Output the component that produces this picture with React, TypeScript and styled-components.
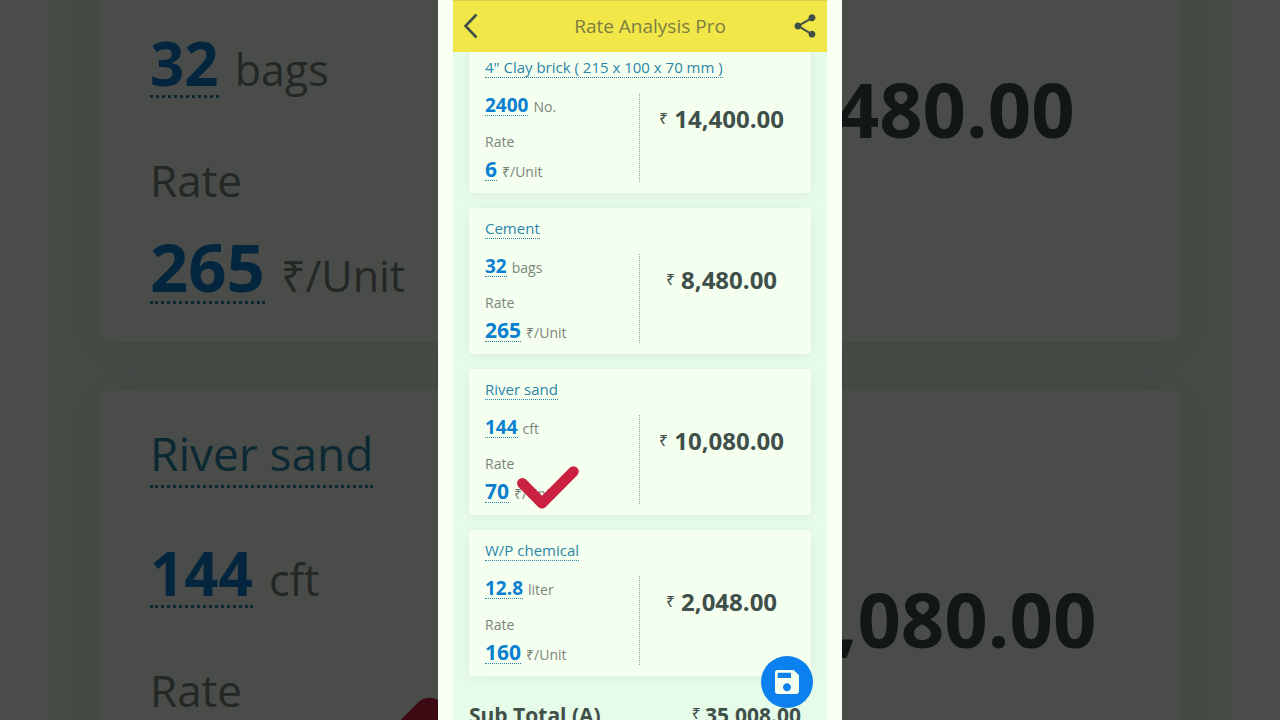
import React from 'react';
import styled, { createGlobalStyle, ThemeProvider } from 'styled-components';
import { MdSave, MdShare } from 'react-icons/md';

type Sized = { theme: { scale?: number } };

/* Turns a phone measure into whole pixels at the current theme's scale. */
const u = (n: number) => ({ theme }: Sized) => `${Math.round(n * (theme.scale ?? 1))}px`;

const GlobalStyle = createGlobalStyle`
  * { box-sizing: border-box; }
  body { margin: 0; background: #4b4d4a; font-family: 'Open Sans', 'Noto Sans', sans-serif; }
  button { font: inherit; color: inherit; border: 0; padding: 0; background: none; cursor: pointer; }
`;

const Stage = styled.main`
  position: relative;
  display: flex;
  justify-content: center;
  height: 100vh;
  overflow: hidden;
`;

const Backdrop = styled.div`
  position: absolute;
  inset: 0;
  padding: 0 48px;
  overflow: hidden;
  background: #f7fff5;

  &::after {
    content: '';
    position: absolute;
    inset: 0;
    background: rgba(0, 0, 0, 0.7);
  }
`;

const BackdropScreen = styled.div`
  height: 100%;
  overflow: hidden;
  background: #e6fbe8;
`;

const Phone = styled.section`
  position: relative;
  display: flex;
  flex-direction: column;
  width: 100%;
  max-width: 404px;
  padding: 0 15px;
  background: #f7fff5;
`;

const Header = styled.header`
  display: flex;
  align-items: center;
  justify-content: space-between;
  flex: none;
  height: 52px;
  padding: 0 8px;
  background: #f1e748;
  box-shadow: inset 0 1px #d9d052;
  color: #3f4f49;
`;

const HeaderButton = styled.button`
  display: grid;
  place-items: center;
  width: 28px;
  height: 28px;
`;

const Title = styled.h1`
  margin: 0;
  padding-left: 20px;
  font-size: 19px;
  line-height: 26px;
  font-weight: 400;
  color: #7d7d45;
`;

const Screen = styled.div`
  flex: 1;
  min-height: 0;
  overflow: hidden;
  background: #e6fbe8;
`;

const List = styled.ul<{ $scrolled: number }>`
  display: flex;
  flex-direction: column;
  gap: ${u(15)};
  margin: -${(p) => p.$scrolled}px 0 0;
  padding: 0 ${u(16)};
  list-style: none;
`;

const Card = styled.li`
  position: relative;
  padding: ${u(10)} ${u(8)} ${u(11)} ${u(16)};
  background: #f5fff0;
  border-radius: ${u(4)};
  box-shadow: 0 ${u(2)} ${u(12)} rgba(20, 60, 30, 0.06);
`;

const Name = styled.button`
  display: block;
  margin-bottom: ${u(15)};
  border-bottom: ${u(1)} dotted #2b86a8;
  font-size: ${u(14.5)};
  line-height: ${u(20)};
  color: #2b86a8;
  white-space: nowrap;
`;

const Body = styled.div`
  display: grid;
  grid-template-columns: ${u(155)} 1fr;
`;

const Figures = styled.div`
  padding-top: ${u(2)};
  border-right: ${u(1)} dotted #9aa59b;
`;

const Line = styled.div`
  display: flex;
  align-items: baseline;
  gap: ${u(5)};
`;

const Value = styled.button<{ $rate?: boolean }>`
  border-bottom: ${u(1)} dotted #2b86a8;
  font-size: ${(p) => u(p.$rate ? 21 : 19)(p)};
  line-height: ${(p) => u(p.$rate ? 22 : 20)(p)};
  font-weight: 700;
  color: #0a80d0;
`;

const Unit = styled.span`
  font-size: ${u(13.5)};
  line-height: ${u(20)};
  color: #7b857c;
`;

const Label = styled.div`
  margin: ${u(15)} 0 ${u(6)};
  font-size: ${u(14)};
  line-height: ${u(20)};
  color: #7b857c;
`;

const Amount = styled.div`
  display: flex;
  justify-content: center;
  align-items: flex-start;
  gap: ${u(6)};
  padding-top: ${u(10)};
  font-size: ${u(24)};
  line-height: ${u(32)};
  font-weight: 700;
  color: #3f4f49;
`;

const Rupee = styled.span`
  font-size: ${u(16)};
  line-height: ${u(30)};
  font-weight: 400;
`;

const Tick = styled.svg`
  position: absolute;
  left: ${u(48)};
  top: ${u(97)};
  width: ${u(62)};
  height: ${u(43)};
`;

const SubTotal = styled.div`
  display: flex;
  justify-content: space-between;
  padding: 25px 26px 0 16px;
  font-size: 21px;
  line-height: 28px;
  font-weight: 700;
  color: #3f4f49;
`;

const SubTotalAmount = styled.span`
  display: flex;
  align-items: flex-start;
  gap: 4px;
`;

const SubTotalRupee = styled(Rupee)`
  line-height: 24px;
`;

const SaveButton = styled.button`
  position: absolute;
  right: 29px;
  bottom: 12px;
  display: grid;
  place-items: center;
  width: 52px;
  height: 52px;
  border-radius: 50%;
  background: #0b80ee;
  color: #f5fff0;
`;

type Material = {
  name: string;
  quantity: string;
  unit: string;
  rate: string;
  amount: string;
  checked?: boolean;
};

const materials: Material[] = [
  { name: '4" Clay brick ( 215 x 100 x 70 mm )', quantity: '2400', unit: 'No.', rate: '6', amount: '14,400.00' },
  { name: 'Cement', quantity: '32', unit: 'bags', rate: '265', amount: '8,480.00' },
  { name: 'River sand', quantity: '144', unit: 'cft', rate: '70', amount: '10,080.00', checked: true },
  { name: 'W/P chemical', quantity: '12.8', unit: 'liter', rate: '160', amount: '2,048.00' },
];

const MaterialCard = ({ item }: { item: Material }) => (
  <Card>
    <Name type="button">{item.name}</Name>
    <Body>
      <Figures>
        <Line>
          <Value type="button">{item.quantity}</Value>
          <Unit>{item.unit}</Unit>
        </Line>
        <Label>Rate</Label>
        <Line>
          <Value type="button" $rate>{item.rate}</Value>
          <Unit>₹/Unit</Unit>
        </Line>
      </Figures>
      <Amount>
        <Rupee>₹</Rupee>
        <span>{item.amount}</span>
      </Amount>
    </Body>
    {item.checked && (
      <Tick viewBox="0 0 62 43" aria-hidden="true">
        <path d="M5.3 17.3 25 37.3 56.5 5.5" fill="none" stroke="#cb2140" strokeWidth="10.5" strokeLinecap="round" strokeLinejoin="round" />
      </Tick>
    )}
  </Card>
);

const BackIcon = () => (
  <svg width="28" height="28" viewBox="0 0 28 28" aria-hidden="true">
    <path d="M15.5 2.5 4.5 14l11 11.5" fill="none" stroke="currentColor" strokeWidth="2.6" />
  </svg>
);

export default function App() {
  return (
    <>
      <GlobalStyle />
      <Stage>
        <ThemeProvider theme={{ scale: 3.168 }}>
          <Backdrop aria-hidden="true" inert>
            <BackdropScreen>
              <List $scrolled={120}>
                {materials.slice(1, 3).map((item) => (
                  <MaterialCard key={item.name} item={item} />
                ))}
              </List>
            </BackdropScreen>
          </Backdrop>
        </ThemeProvider>
        <Phone>
          <Header>
            <HeaderButton type="button" aria-label="Back"><BackIcon /></HeaderButton>
            <Title>Rate Analysis Pro</Title>
            <HeaderButton type="button" aria-label="Share"><MdShare size={28} /></HeaderButton>
          </Header>
          <Screen>
            <List $scrolled={5}>
              {materials.map((item) => (
                <MaterialCard key={item.name} item={item} />
              ))}
            </List>
            <SubTotal>
              <span>Sub Total (A)</span>
              <SubTotalAmount>
                <SubTotalRupee>₹</SubTotalRupee>
                <span>35,008.00</span>
              </SubTotalAmount>
            </SubTotal>
          </Screen>
          <SaveButton type="button" aria-label="Save"><MdSave size={32} /></SaveButton>
        </Phone>
      </Stage>
    </>
  );
}
